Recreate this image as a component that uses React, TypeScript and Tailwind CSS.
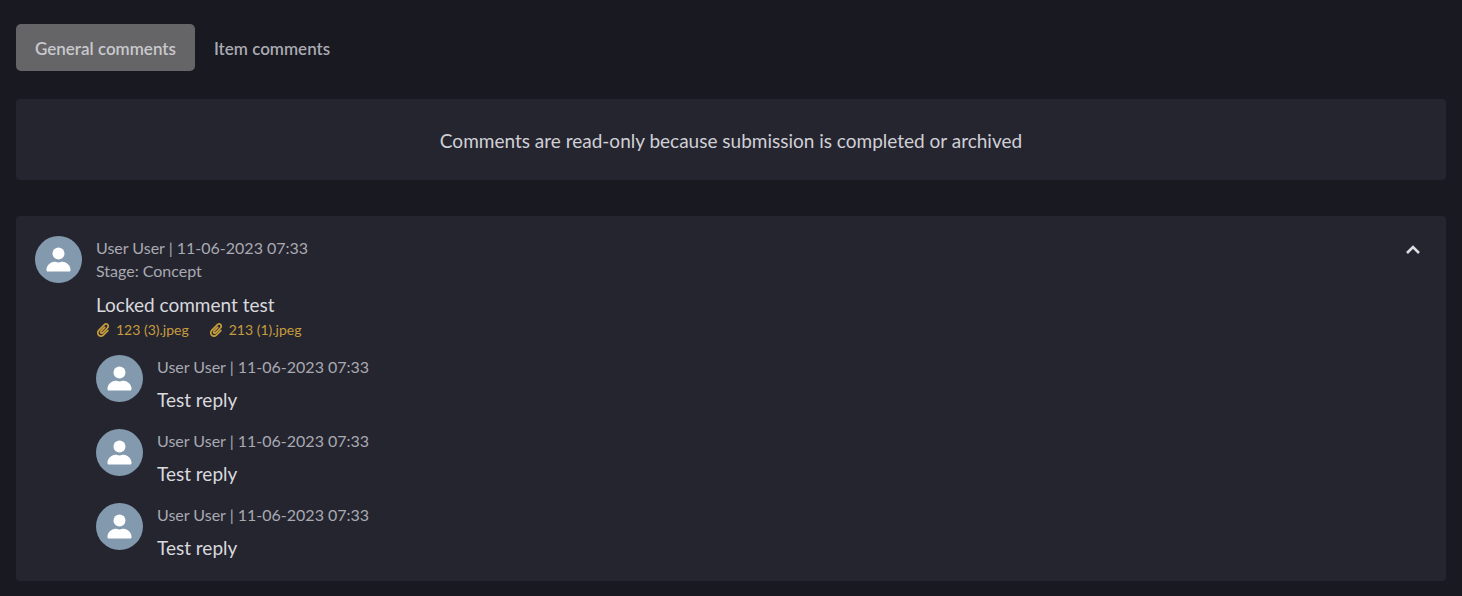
import React, { useState } from 'react';
import { FaPaperclip } from 'react-icons/fa';

interface Reply {
  id: number;
  author: string;
  date: string;
  text: string;
}

interface Comment extends Reply {
  stage: string;
  attachments: string[];
  replies: Reply[];
}

const comment: Comment = {
  id: 1,
  author: 'User User',
  date: '11-06-2023 07:33',
  stage: 'Concept',
  text: 'Locked comment test',
  attachments: ['123 (3).jpeg', '213 (1).jpeg'],
  replies: [
    { id: 2, author: 'User User', date: '11-06-2023 07:33', text: 'Test reply' },
    { id: 3, author: 'User User', date: '11-06-2023 07:33', text: 'Test reply' },
    { id: 4, author: 'User User', date: '11-06-2023 07:33', text: 'Test reply' },
  ],
};

const tabs = ['General comments', 'Item comments'];

const Avatar: React.FC = () => (
  <div className="size-[47px] shrink-0 rounded-full bg-[#8299ae]">
    <svg viewBox="0 0 47 47" className="size-full" fill="#fff" aria-hidden="true">
      <circle cx="23.5" cy="17.5" r="6" />
      <path d="M11.5 33.500c0-4 4-7.800 7.800-7.800 1.600 0 2.200.7 4.200.7s2.600-.7 4.200-.7c3.800 0 7.800 3.800 7.800 7.800v.7c0 .8-.6 1.300-1.300 1.300H12.800c-.7 0-1.300-.5-1.300-1.300z" />
    </svg>
  </div>
);

const ReplyItem: React.FC<{ reply: Reply }> = ({ reply }) => (
  <li className="flex gap-[14px]">
    <Avatar />
    <div>
      <p className="text-[16px] leading-[23px] text-[#a9a9b1]">
        {reply.author} | {reply.date}
      </p>
      <p className="mt-[9px] text-[19px] leading-[26px] text-[#d9d9de]">{reply.text}</p>
    </div>
  </li>
);

const App: React.FC = () => {
  const [activeTab, setActiveTab] = useState(tabs[0]);
  const [isOpen, setIsOpen] = useState(true);

  return (
    <div className="min-h-screen bg-[#191921] px-4 pt-6 pb-[15px] font-['Lato',sans-serif]">
      <div className="flex">
        {tabs.map((tab) => (
          <button
            key={tab}
            onClick={() => setActiveTab(tab)}
            className={`h-[47px] rounded-[5px] px-[19px] pt-[2px] text-[17px] font-semibold ${
              tab === activeTab ? 'bg-[#656568] text-[#c9c9cd]' : 'text-[#aaaab2]'
            }`}
          >
            {tab}
          </button>
        ))}
      </div>

      <div className="mt-7 rounded-[4px] bg-[#252530] px-[19px] pt-[29px] pb-[26px] text-center text-[19px] leading-[26px] text-[#d0d0d6]">
        Comments are read-only because submission is completed or archived
      </div>

      <div className="mt-9 flex items-start gap-[14px] rounded-[4px] bg-[#252530] px-[19px] py-5">
        <Avatar />
        <div className="grow">
          <div className="text-[16px] leading-[23px] text-[#a9a9b1]">
            <p>
              {comment.author} | {comment.date}
            </p>
            <p>Stage: {comment.stage}</p>
          </div>
          {isOpen && (
            <>
              <p className="mt-[10px] text-[19px] leading-[26px] text-[#d9d9de]">{comment.text}</p>
              <div className="flex gap-5 text-[14px] leading-[23px] text-[#c69c3c]">
                {comment.attachments.map((name) => (
                  <a key={name} href="#" className="flex items-center gap-[6px]">
                    <FaPaperclip size={14} />
                    {name}
                  </a>
                ))}
              </div>
              <ul className="mt-[14px] flex flex-col gap-4">
                {comment.replies.map((reply) => (
                  <ReplyItem key={reply.id} reply={reply} />
                ))}
              </ul>
            </>
          )}
        </div>
        <button
          onClick={() => setIsOpen(!isOpen)}
          aria-label="Toggle replies"
          aria-expanded={isOpen}
          className="flex size-7 items-center justify-center text-[#dcdce1]"
        >
          <svg
            width="16"
            height="12"
            viewBox="0 0 16 12"
            fill="none"
            stroke="currentColor"
            strokeWidth="2.600"
            className={isOpen ? '' : 'rotate-180'}
          >
            <path d="M2 9l6-6 6 6" />
          </svg>
        </button>
      </div>
    </div>
  );
};

export default App;
